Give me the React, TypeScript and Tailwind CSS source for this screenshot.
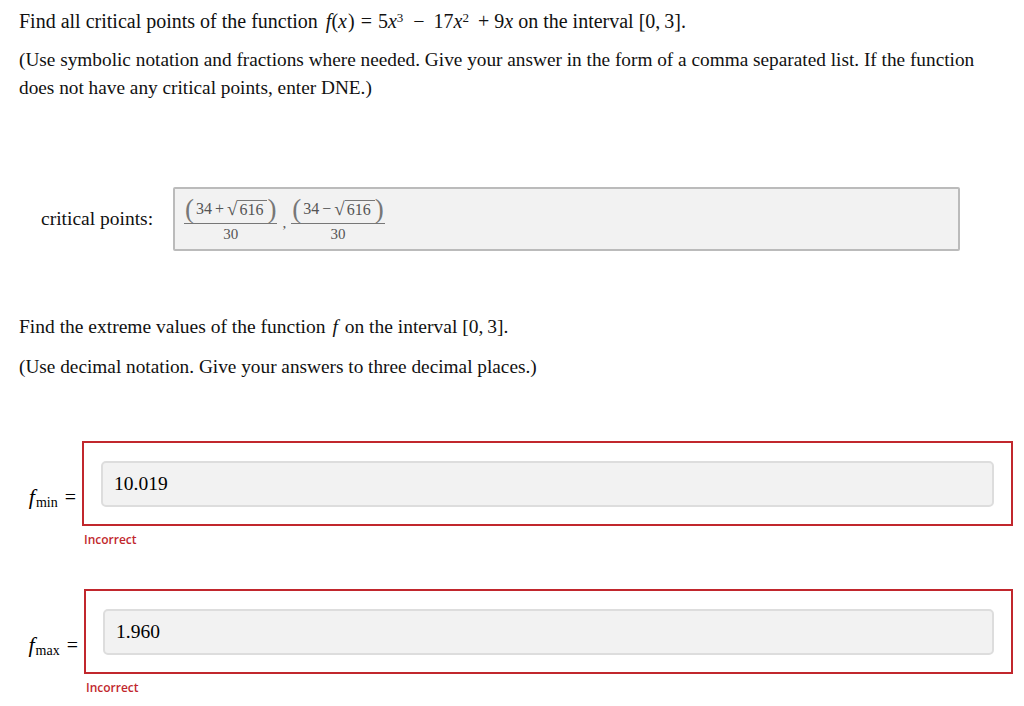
import React from "react";

const serif = { fontFamily: '"Liberation Serif", "Times New Roman", serif' };

function Frac({ sign }: { sign: string }) {
  return (
    <span className="inline-flex flex-col items-center align-middle">
      <span className="flex items-center border-b border-[#777] px-[1px] pb-[1px]">
        <span className="text-[27px] leading-[26px] font-light text-[#777]">(</span>
        <span className="ml-[2px] text-[16px] leading-[18px]">34</span>
        <span className="mx-[3px] text-[16px] leading-[18px]">{sign}</span>
        <span className="flex items-end">
          <span className="text-[19px] leading-[19px]">√</span>
          <span className="border-t border-[#777] text-[16px] leading-[17px] pl-[2px] pr-[4px]">616</span>
        </span>
        <span className="text-[27px] leading-[26px] font-light text-[#777]">)</span>
      </span>
      <span className="text-[15px] leading-[18px] pt-[1px]">30</span>
    </span>
  );
}

function Answer({ sub, value }: { sub: string; value: string }) {
  return (
    <div className="flex flex-col">
      <div className="flex items-end">
        <div className="flex w-[82px] items-baseline justify-end pr-[6px] pb-[13px] text-black">
          <span className="italic text-[22px]">f</span>
          <span className="text-[14px] ml-[1px] translate-y-[3px]">{sub}</span>
          <span className="ml-[7px] text-[20px]">=</span>
        </div>
        <div className="flex h-[85px] flex-1 items-center border-2 border-[#c1272d] pl-[17px] pr-[17px]">
          <div className="flex h-[46px] flex-1 items-center rounded-[5px] border-2 border-[#dddddd] bg-[#f2f2f2] pl-[11px] text-[19.5px] text-black">
            {value}
          </div>
        </div>
      </div>
      <div
        className="mt-[5px] pl-[84px] text-[12px] font-semibold text-[#c1272d]"
        style={{ fontFamily: '"Open Sans", "Noto Sans", sans-serif' }}
      >
        Incorrect
      </div>
    </div>
  );
}

export default function App() {
  return (
    <div className="h-[706px] w-[1024px] overflow-hidden bg-white text-[#111]" style={serif}>
      <div className="pl-[19px] pr-[30px] pt-[7px] leading-[28px]">
        <p className="text-[20px]">
          Find all critical points of the function
          <span className="ml-[8px]">
            <i>f</i>(<i className="pr-[1px]">x</i>)
          </span>
          <span className="mx-[6px]">=</span>
          5<i>x</i>
          <sup className="text-[13px]">3</sup>
          <span className="ml-[10px] mr-[9px]">−</span>
          17<i>x</i>
          <sup className="text-[13px]">2</sup>
          <span className="ml-[9px] mr-[5px]">+</span>
          9<i>x</i> on the interval [0,&thinsp;3].
        </p>
        <p className="mt-[11px] text-[19.3px]">
          (Use symbolic notation and fractions where needed. Give your answer in the form of a comma separated list. If the function
          does not have any critical points, enter DNE.)
        </p>
      </div>

      <div className="mt-[85px] flex items-center">
        <div className="w-[173px] pl-[41px] text-[19.5px]">critical points:</div>
        <div className="flex h-[64px] w-[787px] items-center rounded-[2px] border-2 border-[#bbbbbb] bg-[#f2f2f2] pl-[9px] text-[#555]">
          <Frac sign="+" />
          <span className="mx-[5px] self-center text-[15px] pt-[8px]">,</span>
          <Frac sign="−" />
        </div>
      </div>

      <div className="mt-[62px] pl-[19px] leading-[28px]">
        <p className="text-[19.5px]">
          Find the extreme values of the function <i className="mx-[2px]">f</i> on the interval [0,&thinsp;3].
        </p>
        <p className="mt-[12px] text-[19.3px]">(Use decimal notation. Give your answers to three decimal places.)</p>
      </div>

      <div className="mt-[60px] w-[1013px]">
        <Answer sub="min" value="10.019" />
      </div>
      <div className="mt-[40px] w-[1013px]">
        <div className="pl-[2px]">
          <Answer sub="max" value="1.960" />
        </div>
      </div>
    </div>
  );
}
